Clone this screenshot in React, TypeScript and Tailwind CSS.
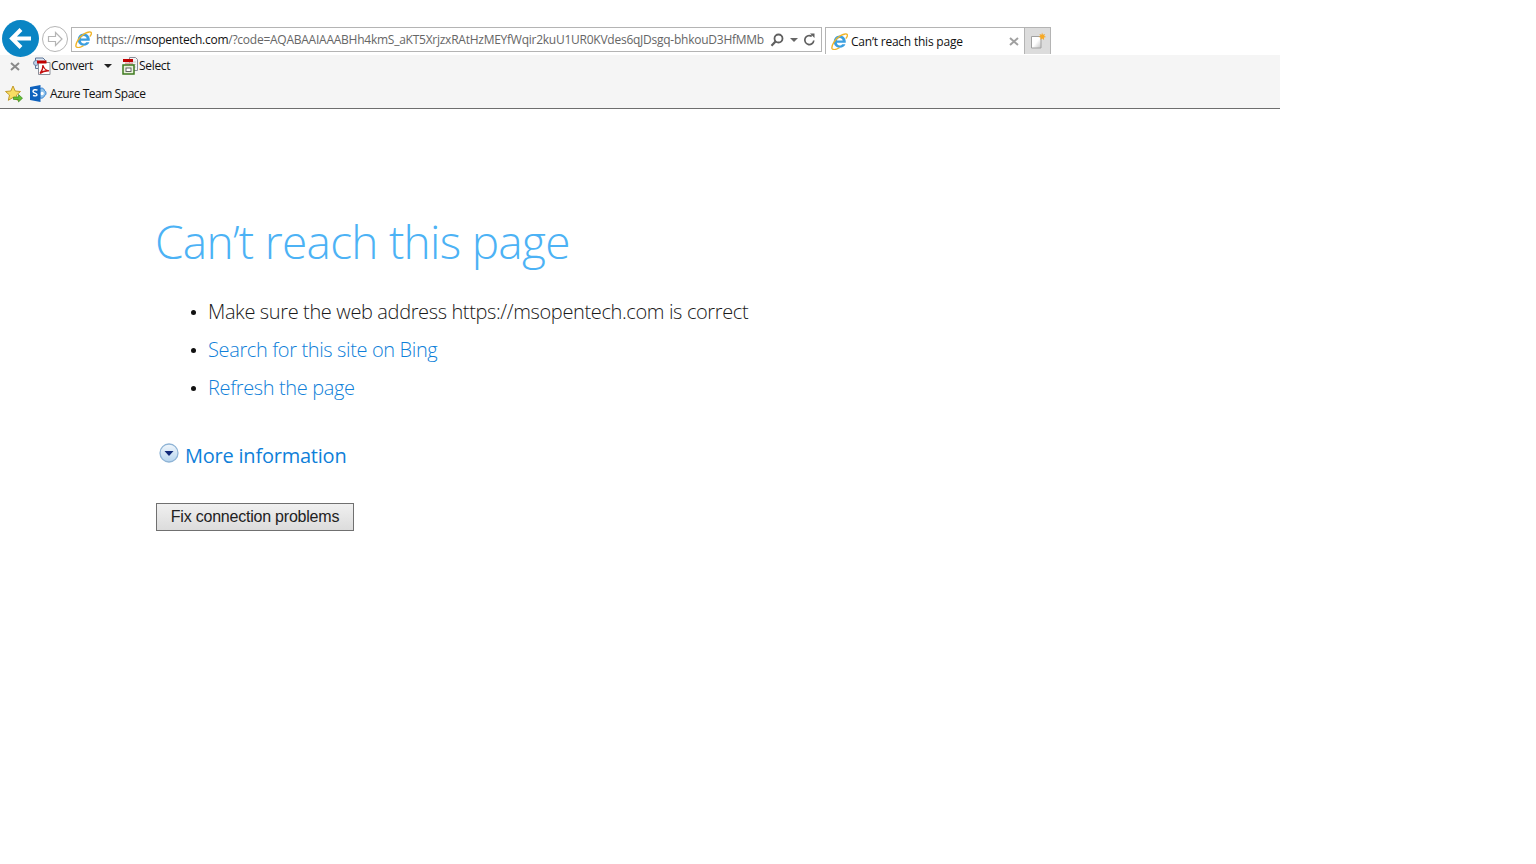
import React from 'react';

const ui = { fontFamily: '"Open Sans", "Noto Sans", sans-serif' };

function IeIcon() {
  return (
    <svg width="17" height="17" viewBox="0 0 17 17" className="shrink-0">
      <path d="M8.800 2.500C5.300 2.500 2.800 5.300 2.800 8.800s2.500 6 6 6c2.700 0 4.800-1.400 5.600-3.500h-3.200c-.5.800-1.400 1.200-2.400 1.200-1.600 0-2.800-1.100-3-2.700h8.900c.1-.3.100-.7.100-1 0-3.500-2.500-6.300-6-6.300zM5.900 7.600c.3-1.400 1.500-2.500 2.900-2.500s2.700 1.100 2.900 2.500H5.900z" fill="#3b9fe0" />
      <path d="M1.200 15.800C-.2 13.300 4 5.500 10 2.300c3-1.600 6-1.900 6.400-.4.300 1.100-.6 2.500-1.600 3.700" fill="none" stroke="#f0b429" strokeWidth="1.400" />
      <path d="M1.200 15.800c1.300 1.300 4.600.5 7.300-1" fill="none" stroke="#f0b429" strokeWidth="1.300" />
    </svg>
  );
}

function BackButton() {
  return (
    <svg width="37" height="37" viewBox="0 0 37 37" className="shrink-0">
      <circle cx="18.500" cy="18.500" r="18.500" fill="#0a85c4" />
      <path d="M19 9.500L10 18.500l9 9M10.500 18.500H29" fill="none" stroke="#fff" strokeWidth="4" />
    </svg>
  );
}

function ForwardButton() {
  return (
    <svg width="26" height="26" viewBox="0 0 26 26" className="shrink-0">
      <circle cx="13" cy="13" r="12.500" fill="#fff" stroke="#b5b5b5" />
      <path d="M13.500 6.500L20 13l-6.500 6.500v-4H6.500v-5h7z" fill="#fff" stroke="#b5b5b5" strokeWidth="1.200" />
    </svg>
  );
}

function SearchIcon() {
  return (
    <svg width="14" height="14" viewBox="0 0 14 14" className="shrink-0">
      <circle cx="8.500" cy="5.500" r="4" fill="none" stroke="#5f5f5f" strokeWidth="1.800" />
      <path d="M5.500 8.500L1.500 12.800" stroke="#5f5f5f" strokeWidth="2.200" />
    </svg>
  );
}

function RefreshIcon() {
  return (
    <svg width="13" height="14" viewBox="0 0 13 14" className="shrink-0">
      <path d="M10.800 7.500a4.500 4.500 0 1 1-2-4.200" fill="none" stroke="#5f5f5f" strokeWidth="1.700" />
      <path d="M7 .5h4.500V5z" fill="#5f5f5f" />
    </svg>
  );
}

function CloseX({ color }: { color: string }) {
  return (
    <svg width="10" height="9" viewBox="0 0 10 9" className="shrink-0">
      <path d="M1 1l8 7M9 1L1 8" stroke={color} strokeWidth="2" />
    </svg>
  );
}

function NewTabIcon() {
  return (
    <svg width="18" height="18" viewBox="0 0 18 18">
      <defs>
        <linearGradient id="newTabPage" x1="0" y1="0" x2="1" y2="1">
          <stop offset="0.500" stopColor="#ffffff" />
          <stop offset="1" stopColor="#c4c4c4" />
        </linearGradient>
      </defs>
      <path d="M2.500 4.500h9.500v11.500H2.500z" fill="url(#newTabPage)" stroke="#a0a0a0" />
      <path d="M13 .5l.9 2.200 2.200-.8-1 2.200 2 1-2.200.5.200 2.300-1.900-1.500-1.800 1.500.2-2.300-2.200-.5 2-1-1-2.200 2.200.8z" fill="#f7a823" />
    </svg>
  );
}

function ConvertIcon() {
  return (
    <svg width="18" height="18" viewBox="0 0 18 18" className="shrink-0">
      <path d="M2.500 1h7.500l2.500 2.500v8h-10z" fill="#dbe6f3" stroke="#5e7596" />
      <circle cx="3" cy="6" r="2.500" fill="#bcd0e8" stroke="#5e7596" strokeWidth=".8" />
      <path d="M5.500 5.500h11.500v12H5.500z" fill="#fff" stroke="#8a8f99" />
      <rect x="4" y="3.500" width="9.500" height="3" fill="#c00000" />
      <path d="M7 16.500c2.200-2.500 3-5.500 3-8.500.6 3.200 2.300 5.300 6 5.800-3.800-.2-6.800.8-9 2.700z" fill="none" stroke="#c41010" strokeWidth="1.300" />
    </svg>
  );
}

function SelectIcon() {
  return (
    <svg width="16" height="18" viewBox="0 0 16 18" className="shrink-0">
      <path d="M7.500 .5h6l2 2v11h-8z" fill="#f3f3f3" stroke="#8a8f99" />
      <path d="M9 5h5M9 7.500h5M9 10h5" stroke="#c9c9c9" />
      <rect x="1" y="2" width="10" height="3" fill="#c00000" />
      <path d="M3 5.500h8v2H3z" fill="#e0a8a8" />
      <rect x="1" y="8" width="11" height="9" fill="#e8f0dc" stroke="#3d7a1e" strokeWidth="1.500" />
      <rect x="4" y="11" width="5" height="3.500" fill="#fff" stroke="#555" strokeWidth=".9" />
    </svg>
  );
}

function FavoritesIcon() {
  return (
    <svg width="18" height="18" viewBox="0 0 18 18" className="shrink-0">
      <path d="M8 1l2.200 5 5.300.5-4 3.500 1.200 5.300L8 12.500l-4.700 2.800L4.500 10l-4-3.500L5.800 6z" fill="#f8dd63" stroke="#c29a2a" />
      <path d="M8.500 12h5V9.500l4 3.700-4 3.700v-2.400h-5z" fill="#63bf35" stroke="#3d8a1c" strokeWidth=".7" />
    </svg>
  );
}

function SharePointIcon() {
  return (
    <svg width="17" height="17" viewBox="0 0 17 17" className="shrink-0">
      <path d="M9 4.500c2-2.500 5-1.500 5.500 1 2 .8 2 4.500 0 5.200C13.500 13.500 10.500 14 9 12z" fill="#8fc1ea" stroke="#2f7fd1" />
      <circle cx="12" cy="8.500" r="1.800" fill="#fff" />
      <path d="M0 2l10.500-2v17L0 15z" fill="#0f62bd" />
      <path d="M7.500 5.200C5.600 4.200 3 4.700 3 6.500c0 2 4 1.400 4 3.300 0 1.200-2.200 1.400-4 .5" fill="none" stroke="#fff" strokeWidth="1.400" />
    </svg>
  );
}

function MoreInfoIcon() {
  return (
    <svg width="20" height="20" viewBox="0 0 20 20" className="shrink-0">
      <defs>
        <linearGradient id="moreInfo" x1="0" y1="0" x2="0" y2="1">
          <stop offset="0" stopColor="#f2f7fc" />
          <stop offset="1" stopColor="#b6d5ef" />
        </linearGradient>
      </defs>
      <circle cx="10" cy="10" r="9" fill="url(#moreInfo)" stroke="#8fb4d6" strokeWidth="1.300" />
      <path d="M5.500 8h9L10 13z" fill="#102a7a" />
    </svg>
  );
}

function Bullet({ children }: { children: React.ReactNode }) {
  return (
    <li className="flex h-[38px] items-center">
      <span className="ml-[1px] mr-[12px] h-[5px] w-[5px] rounded-full bg-[#111]" />
      {children}
    </li>
  );
}

export default function App() {
  return (
    <div className="min-h-screen w-full bg-white" style={ui}>
      <div className="w-[1280px]">
        {/* Address bar and tabs */}
        <div className="flex h-[55px] items-start pl-[2px] pt-[20px]">
          <BackButton />
          <div className="ml-[3px] mt-[6px]">
            <ForwardButton />
          </div>
          <div className="ml-[3px] mt-[7px] flex h-[25px] w-[751px] items-center border border-[#b4b4b4] pl-[3px] pr-[4px] text-[12px]">
            <IeIcon />
            <span className="ml-[4px] w-[669px] shrink-0 overflow-hidden whitespace-nowrap tracking-[-0.25px] text-[#666]">
              https://<span className="text-[#111]">msopentech.com</span>/?code=AQABAAIAAABHh4kmS_aKT5XrjzxRAtHzMEYfWqir2kuU1UR0KVdes6qJDsgq-bhkouD3HfMMb
            </span>
            <span className="ml-[5px]">
              <SearchIcon />
            </span>
            <span className="ml-[6px] h-0 w-0 border-x-[4px] border-t-[4px] border-x-transparent border-t-[#666]" />
            <span className="ml-[5px]">
              <RefreshIcon />
            </span>
          </div>
          <div className="ml-[3px] mt-[7px] flex h-[27px] w-[226px] border border-b-0 border-[#b4b4b4]">
            <div className="flex w-[198px] items-center pl-[5px] pr-[5px] pt-[1px] text-[12px] text-[#111]">
              <IeIcon />
              <span className="ml-[3px] flex-1 tracking-[-0.22px]">Can’t reach this page</span>
              <CloseX color="#a0a0a0" />
            </div>
            <div className="flex flex-1 items-center justify-center border-l border-[#b4b4b4] bg-[#dcdcdc]">
              <NewTabIcon />
            </div>
          </div>
        </div>

        {/* Command and favorites bars */}
        <div className="h-[54px] border-b border-[#6e6e6e] bg-[#f5f5f5] text-[12px] text-[#111]">
          <div className="flex h-[22px] items-center pl-[10px] tracking-[-0.3px]">
            <CloseX color="#8a8a8a" />
            <span className="ml-[13px]">
              <ConvertIcon />
            </span>
            <span className="ml-0">Convert</span>
            <span className="ml-[11px] h-0 w-0 border-x-[4px] border-t-[4px] border-x-transparent border-t-[#222]" />
            <span className="ml-[10px]">
              <SelectIcon />
            </span>
            <span className="ml-[1px]">Select</span>
          </div>
          <div className="mt-[4px] flex h-[25px] items-center pl-[5px] tracking-[-0.45px]">
            <FavoritesIcon />
            <span className="ml-[7px]">
              <SharePointIcon />
            </span>
            <span className="ml-[3px]">Azure Team Space</span>
          </div>
        </div>

        {/* Error page */}
        <div className="pl-[156px] pt-[100px]">
          <h1 className="-ml-[1px] h-[64px] text-[46px] font-light leading-[64px] tracking-[-0.72px] text-[#4cb2f5]">Can’t reach this page</h1>
          <ul className="ml-[34px] mt-[20px] text-[20px] font-light tracking-[-0.37px] text-[#1a1a1a]">
            <Bullet>Make sure the web address https://msopentech.com is correct</Bullet>
            <Bullet>
              <a className="text-[#0f7fd9]">Search for this site on Bing</a>
            </Bullet>
            <Bullet>
              <a className="text-[#0f7fd9]">Refresh the page</a>
            </Bullet>
          </ul>
          <div className="mt-[33px] flex h-[32px] items-center pl-[3px] text-[20px] tracking-[-0.22px] text-[#0f7fd9]">
            <span className="-mt-[6px]">
              <MoreInfoIcon />
            </span>
            <span className="ml-[6px]">More information</span>
          </div>
          <button
            className="mt-[31px] h-[28px] w-[198px] border border-[#707070] bg-gradient-to-b from-[#f0f0f0] to-[#dcdcdc] text-[16px] leading-none tracking-[-0.22px] text-[#222]"
            style={{ fontFamily: '"Liberation Sans", Arial, sans-serif' }}
          >
            Fix connection problems
          </button>
        </div>
      </div>
    </div>
  );
}
